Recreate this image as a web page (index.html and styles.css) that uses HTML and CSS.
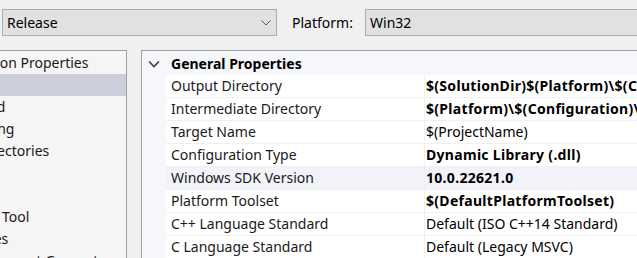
FILE: index.html
```html
<!DOCTYPE html>
<html>
<head>
<meta charset="utf-8">
<link rel="stylesheet" href="styles.css">
</head>
<body>
<div class="toolbar">
  <div class="combo combo-config">
    <span class="combo-text">Release</span>
    <svg class="chev" width="10" height="6" viewBox="0 0 10 6"><path d="M0.5 0.5 L5 5 L9.5 0.5" fill="none" stroke="#555" stroke-width="1"/></svg>
  </div>
  <label class="tb-label">Platform:</label>
  <div class="combo combo-platform">
    <span class="combo-text">Win32</span>
    <svg class="chev" width="10" height="6" viewBox="0 0 10 6"><path d="M0.5 0.5 L5 5 L9.5 0.5" fill="none" stroke="#555" stroke-width="1"/></svg>
  </div>
</div>
<div class="main">
  <div class="tree">
    <ul class="tree-list">
      <li class="node lvl1">Configuration Properties</li>
      <li class="node lvl2 selected">General</li>
      <li class="node lvl2">Advanced</li>
      <li class="node lvl2">Debugging</li>
      <li class="node lvl2">VC++ Directories</li>
      <li class="node lvl2 exp">C/C++</li>
      <li class="node lvl2 exp">Linker</li>
      <li class="node lvl2 exp">Manifest Tool</li>
      <li class="node lvl2 exp">Resources</li>
      <li class="node lvl2 exp">XML Document Generator</li>
    </ul>
  </div>
  <div class="grid-panel">
    <div class="cat-row">
      <div class="cat-toggle">
        <svg width="12" height="8" viewBox="0 0 12 8"><path d="M1 1.5 L6 6.5 L11 1.5" fill="none" stroke="#3c3c3c" stroke-width="1.6"/></svg>
      </div>
      <div class="cat-title">General Properties</div>
    </div>
    <div class="prop-rows">
      <div class="prop"><div class="pname">Output Directory</div><div class="pval b">$(SolutionDir)$(Platform)\$(Configuration)\</div></div>
      <div class="prop"><div class="pname">Intermediate Directory</div><div class="pval b">$(Platform)\$(Configuration)\</div></div>
      <div class="prop"><div class="pname">Target Name</div><div class="pval">$(ProjectName)</div></div>
      <div class="prop"><div class="pname">Configuration Type</div><div class="pval b">Dynamic Library (.dll)</div></div>
      <div class="prop hl"><div class="pname">Windows SDK Version</div><div class="pval b">10.0.22621.0</div></div>
      <div class="prop"><div class="pname">Platform Toolset</div><div class="pval b">$(DefaultPlatformToolset)</div></div>
      <div class="prop"><div class="pname">C++ Language Standard</div><div class="pval">Default (ISO C++14 Standard)</div></div>
      <div class="prop"><div class="pname">C Language Standard</div><div class="pval">Default (Legacy MSVC)</div></div>
    </div>
  </div>
</div>
</body>
</html>
```
FILE: styles.css
```css
* { box-sizing: border-box; }
html, body {
  margin: 0;
  padding: 0;
  background: #f0f0f0;
  width: 637px;
  height: 258px;
  overflow: hidden;
  font-family: "Noto Sans", "Open Sans", sans-serif;
  font-size: 14px;
  color: #1a1a1a;
}
.toolbar {
  display: flex;
  align-items: center;
  height: 50px;
  padding: 6px 0 11px 2px;
}
.combo {
  height: 27px;
  border: 1px solid #adadad;
  background: #e1e1e1;
  display: flex;
  align-items: center;
  padding: 0 0 0 4px;
  flex: none;
}
.combo-config { width: 275px; }
.combo-platform { width: 300px; }
.combo-text { flex: 1; color: #000; }
.chev { margin-right: 5px; flex: none; }
.tb-label {
  margin-left: 15px;
  width: 73px;
  flex: none;
  color: #000;
}
.main {
  display: flex;
  align-items: flex-start;
  height: 208px;
}
.tree {
  width: 127px;
  height: 208px;
  border-top: 1px solid #a0a0a0;
  border-right: 1px solid #a0a0a0;
  background: #f5f5f5;
  overflow: hidden;
  flex: none;
  padding-top: 1px;
}
.tree-list {
  list-style: none;
  margin: 0 0 0 -74px;
  padding: 0;
  width: 300px;
}
.node {
  height: 22px;
  line-height: 22px;
  white-space: nowrap;
  color: #1a1a1a;
}
.lvl2 { padding-left: 15px; }
.selected { background: #cccedb; }
.grid-panel {
  margin-left: 14px;
  flex: 1;
  height: 208px;
  border-left: 1px solid #a0a0a0;
  border-top: 1px solid #a0a0a0;
  background: #f5f7fb;
  overflow: hidden;
}
.cat-row {
  display: flex;
  align-items: center;
  height: 24px;
}
.cat-toggle {
  width: 24px;
  display: flex;
  justify-content: center;
  align-items: center;
  padding-top: 1px;
}
.cat-title {
  font-weight: bold;
  color: #000;
  padding-left: 5px;
}
.prop-rows { margin-left: 24px; }
.prop {
  display: flex;
  height: 23px;
  background: #fff;
  border-bottom: 1px solid #f0f0f0;
}
.prop.hl { background: #f1f3f8; }
.pname {
  width: 259px;
  flex: none;
  padding-left: 5px;
  line-height: 22px;
  border-right: 1px solid #f0f0f0;
  white-space: nowrap;
  color: #1a1a1a;
}
.pval {
  padding-left: 1px;
  line-height: 22px;
  white-space: nowrap;
  color: #000;
}
.pval.b { font-weight: bold; letter-spacing: 0.3px; }
```
